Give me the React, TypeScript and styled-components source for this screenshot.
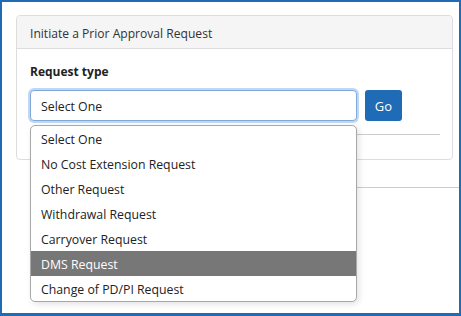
import React from "react";
import styled, { createGlobalStyle } from "styled-components";

const Global = createGlobalStyle`
  html, body { margin: 0; padding: 0; background: #ffffff; }
  * { box-sizing: border-box; }
  body { font-family: "Open Sans", "Noto Sans", sans-serif; color: #333; }
`;

const Frame = styled.div`
  width: 461px;
  height: 316px;
  border: 2px solid #1f6bb5;
  border-bottom-width: 3px;
  padding: 13px 6px 0 14px;
  background: #fff;
  overflow: hidden;
`;

const Card = styled.div`
  width: 437px;
  height: 145px;
  border: 1px solid #dddddd;
  border-radius: 4px;
  background: #fff;
`;

const CardHeader = styled.div`
  height: 33px;
  background: #f5f5f5;
  border-bottom: 1px solid #dddddd;
  border-radius: 3px 3px 0 0;
  display: flex;
  align-items: center;
  padding: 2px 13px 0;
  font-size: 12.1px;
  color: #333;
`;

const CardBody = styled.div`
  padding: 14px 12px 0 13px;
`;

const Label = styled.div`
  font-weight: 700;
  font-size: 12px;
  line-height: 18px;
  color: #222;
  margin-bottom: 9px;
`;

const Row = styled.div`
  display: flex;
  align-items: flex-start;
  gap: 8px;
`;

const SelectWrap = styled.div`
  position: relative;
  width: 327px;
`;

const SelectBox = styled.div`
  height: 31px;
  border: 1px solid #7ea9da;
  border-radius: 4px;
  box-shadow: 0 0 0 2px #c3d8f0;
  display: flex;
  align-items: center;
  padding: 1px 10px 0;
  font-size: 12.3px;
  color: #222;
  background: #fff;
`;

const GoButton = styled.button`
  height: 31px;
  width: 37px;
  border: none;
  border-radius: 3px;
  background: #1f6bb5;
  color: #fff;
  font-family: inherit;
  font-size: 13px;
  padding: 1px 0 0;
`;

const Divider = styled.div`
  height: 1px;
  background: #cccccc;
  margin-top: 13px;
  width: 410px;
`;

const OuterRule = styled.div`
  height: 1px;
  background: #cccccc;
  margin: 27px -6px 0 14px;
`;

const Menu = styled.ul`
  position: absolute;
  left: 0;
  top: 35px;
  width: 327px;
  margin: 0;
  padding: 0;
  list-style: none;
  background: #fff;
  border: 1px solid #a8a8a8;
  border-radius: 5px;
  box-shadow: 2px 2px 6px rgba(0, 0, 0, 0.12);
  overflow: hidden;
  z-index: 2;
`;

const Option = styled.li<{ $active?: boolean }>`
  height: 25px;
  display: flex;
  align-items: center;
  padding: 1px 10px 0;
  font-size: 12.3px;
  color: ${(p) => (p.$active ? "#ffffff" : "#222")};
  background: ${(p) => (p.$active ? "#777777" : "transparent")};
`;

const options = [
  "Select One",
  "No Cost Extension Request",
  "Other Request",
  "Withdrawal Request",
  "Carryover Request",
  "DMS Request",
  "Change of PD/PI Request",
];

export default function App() {
  return (
    <>
      <Global />
      <Frame>
        <Card>
          <CardHeader>Initiate a Prior Approval Request</CardHeader>
          <CardBody>
            <Label>Request type</Label>
            <Row>
              <SelectWrap>
                <SelectBox>Select One</SelectBox>
                <Menu>
                  {options.map((o) => (
                    <Option key={o} $active={o === "DMS Request"}>
                      {o}
                    </Option>
                  ))}
                </Menu>
              </SelectWrap>
              <GoButton>Go</GoButton>
            </Row>
            <Divider />
          </CardBody>
        </Card>
        <OuterRule />
      </Frame>
    </>
  );
}
